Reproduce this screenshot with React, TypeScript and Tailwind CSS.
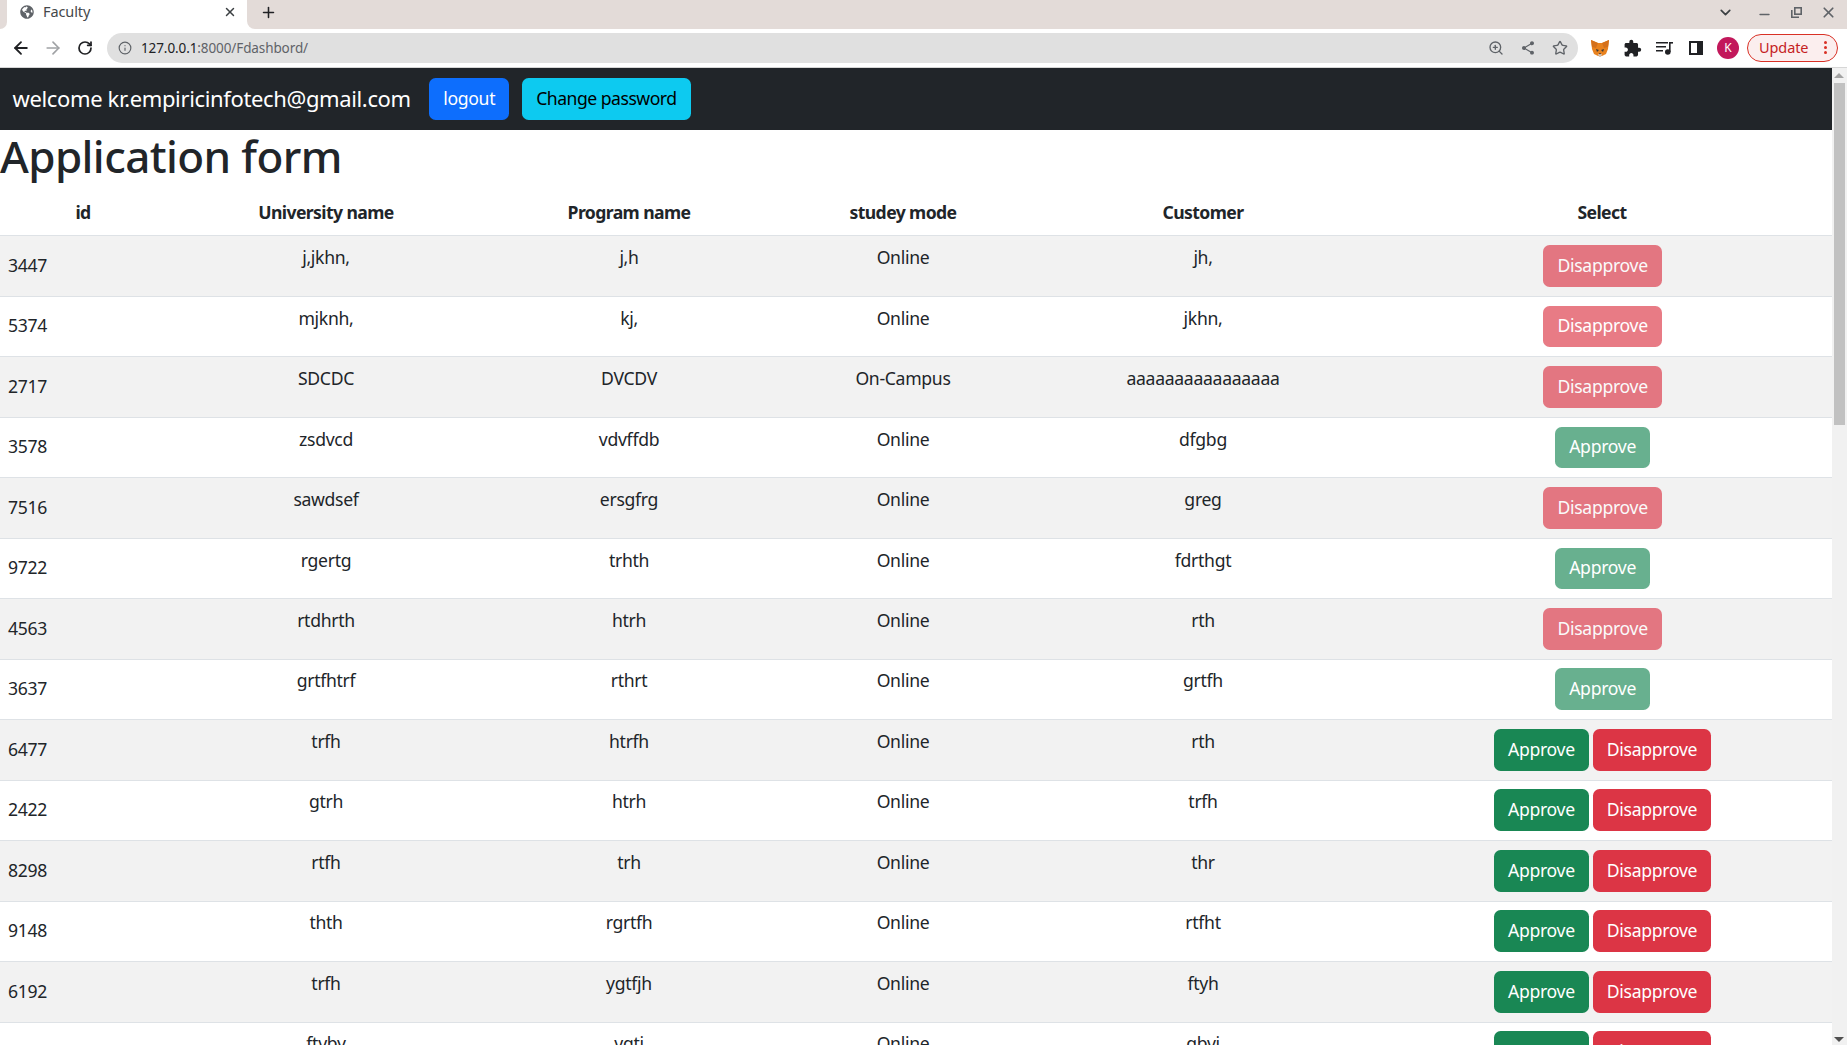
import { ArrowLeft, ArrowRight, ChevronDown, Info, Minus, Plus, RotateCw, Star, X, ZoomIn } from "lucide-react"
import { FaGlobeAmericas } from "react-icons/fa"
import { MdExtension, MdShare } from "react-icons/md"

type Status = "pending" | "approved" | "disapproved"

const rows: [string, string, string, string, string, Status][] = [
  ["3447", "j,jkhn,", "j,h", "Online", "jh,", "approved"],
  ["5374", "mjknh,", "kj,", "Online", "jkhn,", "approved"],
  ["2717", "SDCDC", "DVCDV", "On-Campus", "aaaaaaaaaaaaaaaa", "approved"],
  ["3578", "zsdvcd", "vdvffdb", "Online", "dfgbg", "disapproved"],
  ["7516", "sawdsef", "ersgfrg", "Online", "greg", "approved"],
  ["9722", "rgertg", "trhth", "Online", "fdrthgt", "disapproved"],
  ["4563", "rtdhrth", "htrh", "Online", "rth", "approved"],
  ["3637", "grtfhtrf", "rthrt", "Online", "grtfh", "disapproved"],
  ["6477", "trfh", "htrfh", "Online", "rth", "pending"],
  ["2422", "gtrh", "htrh", "Online", "trfh", "pending"],
  ["8298", "rtfh", "trh", "Online", "thr", "pending"],
  ["9148", "thth", "rgrtfh", "Online", "rtfht", "pending"],
  ["6192", "trfh", "ygtfjh", "Online", "ftyh", "pending"],
  ["", "ftvby", "vgti", "Online", "gbvj", "pending"],
]

const Fox = () => (
  <svg width="18" height="17" viewBox="0 0 18 17">
    <polygon points="0,0 7,3 11,3 18,0 17,9 15,14 11,16 7,16 3,14 1,9" fill="#e8821e" />
    <polygon points="0,0 7,3 5,8 1,7" fill="#d5701a" />
    <polygon points="18,0 11,3 13,8 17,7" fill="#d5701a" />
    <polygon points="5,9 8,10 6,12" fill="#3a3a3a" />
    <polygon points="13,9 10,10 12,12" fill="#3a3a3a" />
    <polygon points="7,14 11,14 10,17 8,17" fill="#d9c3b0" />
    <polygon points="8,13 10,13 9,14.5" fill="#333" />
  </svg>
)

const SidePanel = () => (
  <svg width="14" height="14" viewBox="0 0 14 14">
    <rect width="14" height="14" fill="#202124" />
    <rect x="2" y="2" width="6" height="10" fill="#fff" />
  </svg>
)

const MediaControl = () => (
  <svg width="17" height="14" viewBox="0 0 17 14" fill="#202124">
    <rect x="0" y="1" width="12" height="1.5" />
    <rect x="0" y="5" width="10" height="1.5" />
    <rect x="0" y="9" width="7" height="1.5" />
    <rect x="13" y="1" width="4" height="1.6" />
    <rect x="13" y="1" width="1.6" height="10" />
    <circle cx="11.8" cy="11" r="2.8" />
  </svg>
)

const Restore = () => (
  <svg width="11" height="11" viewBox="0 0 11 11" fill="none" stroke="#5f6368" strokeWidth="1.6">
    <rect x="3.8" y="0.8" width="6.4" height="6.4" />
    <path d="M0.8 3v7.2H8" />
  </svg>
)

const ToolButton = ({ children }: { children: React.ReactNode }) => (
  <div className="w-8 h-8 flex items-center justify-center shrink-0">{children}</div>
)

const ActionButton = ({ label, color, faded }: { label: string; color: string; faded?: boolean }) => (
  <button className={`h-[41.9px] px-[14px] pb-[2px] rounded-[6.6px] text-white text-[17.6px] ${color} ${faded ? "opacity-65" : ""}`}>
    {label}
  </button>
)

const Browser = () => (
  <div className="bg-white shrink-0 tracking-[-0.1px]">
    <div className="h-[29px] flex">
      <div className="w-[7px] bg-[#e3dbd8] rounded-br-lg" />
      <div className="w-[240px] flex items-center pl-[13px] pr-[10px] pb-[6px] text-[#45474a] text-[14.5px]">
        <FaGlobeAmericas className="text-[#5f6368] text-[14px] mr-[9px]" />
        <span className="flex-1">Faculty</span>
        <X size={14} strokeWidth={2.5} className="text-[#3c4043]" />
      </div>
      <div className="flex-1 bg-[#e3dbd8] rounded-bl-lg flex items-center pl-[13px] pr-[10px] pb-[5px]">
        <Plus size={17} strokeWidth={2.2} className="text-[#202124]" />
        <div className="flex-1" />
        <ChevronDown size={17} strokeWidth={2.4} className="text-[#3c4043]" />
        <Minus size={15} strokeWidth={2.6} className="text-[#5f6368] ml-[23px] mt-[5px]" />
        <div className="ml-[19px]"><Restore /></div>
        <X size={17} strokeWidth={2.4} className="text-[#5f6368] ml-[18px]" />
      </div>
    </div>
    <div className="h-[39px] border-b border-[#d6d6d6] flex items-center pl-[5px] pr-[9px]">
      <ToolButton><ArrowLeft size={20} strokeWidth={2.2} className="text-[#202124]" /></ToolButton>
      <ToolButton><ArrowRight size={20} strokeWidth={2} className="text-[#a0a2a5]" /></ToolButton>
      <ToolButton><RotateCw size={16} strokeWidth={2.6} className="text-[#202124]" /></ToolButton>
      <div className="ml-[6px] flex-1 h-[30px] rounded-full bg-[#e0e0e0] flex items-center pl-[11px] pr-[2px]">
        <Info size={14} className="text-[#5f6368] mr-[9px]" />
        <span className="flex-1 text-[13.5px] text-[#5f6368]"><span className="text-[#202124]">127.0.0.1</span>:8000/Fdashbord/</span>
        <ToolButton><ZoomIn size={16} className="text-[#5f6368]" /></ToolButton>
        <ToolButton><MdShare size={16} className="text-[#5f6368]" /></ToolButton>
        <ToolButton><Star size={16} className="text-[#5f6368]" /></ToolButton>
      </div>
      <div className="ml-[6px] flex items-center">
        <ToolButton><Fox /></ToolButton>
        <ToolButton><MdExtension size={19} className="text-[#202124]" /></ToolButton>
        <ToolButton><MediaControl /></ToolButton>
        <ToolButton><SidePanel /></ToolButton>
        <ToolButton>
          <div className="w-[22px] h-[22px] rounded-full bg-[#c2185b] text-white text-[12px] flex items-center justify-center">K</div>
        </ToolButton>
      </div>
      <div className="ml-[3px] w-[91px] h-[28px] rounded-full border border-[#d93025] bg-[#fbeeee] flex items-center justify-between pl-[11px] pr-[10px] pb-[1px] text-[#c5221f] text-[14.5px]">
        <span>Update</span>
        <span className="flex flex-col gap-[2px]">
          <span className="w-[3px] h-[3px] rounded-full bg-[#d93025]" />
          <span className="w-[3px] h-[3px] rounded-full bg-[#d93025]" />
          <span className="w-[3px] h-[3px] rounded-full bg-[#d93025]" />
        </span>
      </div>
    </div>
  </div>
)

const Scrollbar = () => (
  <div className="w-[15px] shrink-0 bg-[#f1f1f1] flex flex-col items-end pr-[2px] pt-[5px]">
    <div className="w-0 h-0 self-center border-x-[5px] border-x-transparent border-b-[5px] border-b-[#a3a3a3] mb-[5px]" />
    <div className="w-[11px] h-[342px] bg-[#c1c1c1]" />
    <div className="flex-1" />
    <div className="w-0 h-0 self-center border-x-[5px] border-x-transparent border-t-[5px] border-t-[#505050] mb-[3px]" />
  </div>
)

export default function App() {
  return (
    <div className="h-[1045px] overflow-hidden flex flex-col bg-white font-['Noto_Sans',sans-serif] text-[#212529] text-[17.6px] leading-[26.4px] tracking-[-0.3px]">
      <Browser />
      <div className="flex-1 flex min-h-0">
        <div className="flex-1 min-w-0 overflow-hidden">
          <nav className="h-[62px] bg-[#212529] flex items-center pl-[12.5px] pr-[13.2px]">
            <span className="text-white text-[22px] tracking-[-0.36px] mr-[18.4px] pb-[2px]">welcome kr.empiricinfotech@gmail.com</span>
            <ActionButton label="logout" color="bg-[#0d6efd]" />
            <button className="ml-[13px] h-[41.9px] px-[14px] pb-[2px] rounded-[6.6px] bg-[#0dcaf0] text-black text-[17.6px] tracking-[-0.5px]">Change password</button>
          </nav>
          <h1 className="text-[44px] leading-[52.8px] tracking-[-0.6px] font-medium mb-[8.5px]">Application form</h1>
          <table className="w-full table-fixed">
            <colgroup>
              <col className="w-[166px]" />
              <col className="w-[320px]" />
              <col className="w-[286px]" />
              <col className="w-[262px]" />
              <col className="w-[338px]" />
              <col />
            </colgroup>
            <thead>
              <tr className="border-b border-[#dee2e6]">
                {["id", "University name", "Program name", "studey mode", "Customer", "Select"].map((h) => (
                  <th key={h} className="pt-[8px] pb-[9.6px] px-[8.8px] font-bold text-center tracking-[-0.6px]">{h}</th>
                ))}
              </tr>
            </thead>
            <tbody>
              {rows.map((r, i) => (
                <tr key={r[1] + i} className={`border-b border-[#dee2e6] ${i % 2 === 0 ? "bg-[#f2f2f2]" : ""}`}>
                  <td className="pt-[7.8px] pb-[9.8px] pl-[8px] pr-[8.8px] align-middle">{r[0]}</td>
                  <td className="pt-[7.8px] pb-[9.8px] px-[8.8px] align-top text-center">{r[1]}</td>
                  <td className="pt-[7.8px] pb-[9.8px] px-[8.8px] align-top text-center">{r[2]}</td>
                  <td className="pt-[7.8px] pb-[9.8px] px-[8.8px] align-top text-center">{r[3]}</td>
                  <td className="pt-[7.8px] pb-[9.8px] px-[8.8px] align-top text-center">{r[4]}</td>
                  <td className="py-[8.8px] pl-[10px] pr-[8.8px] align-middle">
                    <div className="flex justify-center gap-[4px]">
                      {r[5] !== "approved" && <ActionButton label="Approve" color="bg-[#198754]" faded={r[5] === "disapproved"} />}
                      {r[5] !== "disapproved" && <ActionButton label="Disapprove" color="bg-[#dc3545]" faded={r[5] === "approved"} />}
                    </div>
                  </td>
                </tr>
              ))}
            </tbody>
          </table>
        </div>
        <Scrollbar />
      </div>
    </div>
  )
}
